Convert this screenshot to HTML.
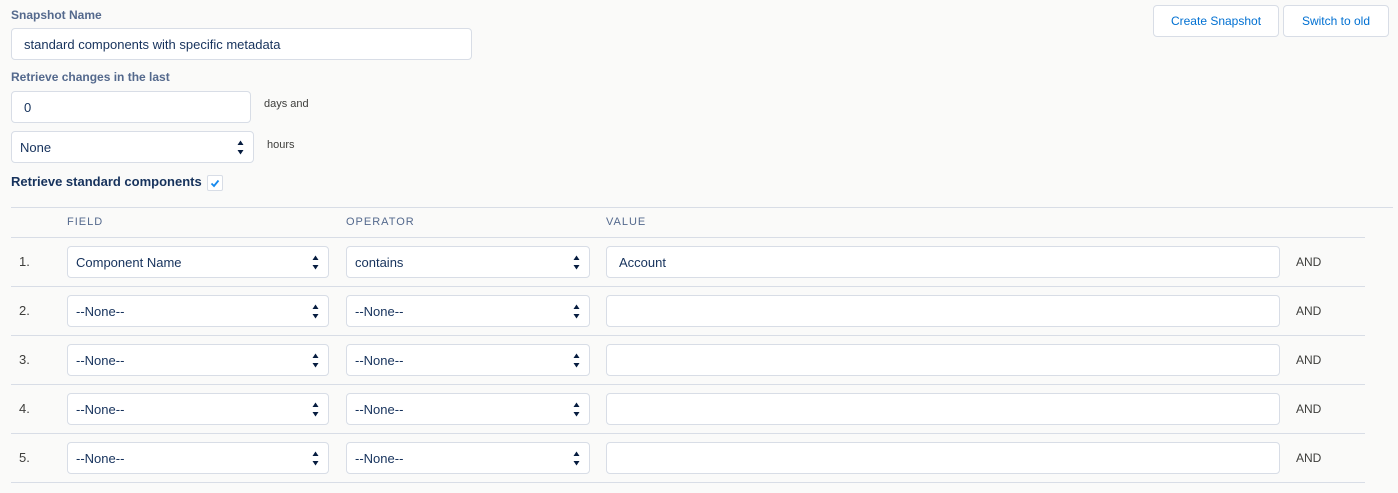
<!DOCTYPE html>
<html><head><meta charset="utf-8"><style>
*{box-sizing:border-box;margin:0;padding:0}
body{width:1398px;height:493px;background:#fafaf9;font-family:"Liberation Sans",sans-serif;position:relative;overflow:hidden;color:#16325c}
.a{position:absolute}
.lbl{font-size:12px;color:#54698d;font-weight:bold}
.box{position:absolute;background:#fff;border:1px solid #d8dde6;border-radius:4px;font-size:13px;color:#16325c;padding-left:12px;display:flex;align-items:center}
.sel{padding-left:8px}
.arr{position:absolute;right:9px;top:8px;width:7px;height:15px}
.small{font-size:11px;color:#3e3e3c}
.hd{font-size:11px;color:#54698d;letter-spacing:1px}
.line{position:absolute;height:1px;background:#d8dde6}
.btn{position:absolute;background:#fff;border:1px solid #d8dde6;border-radius:4px;color:#0070d2;font-size:12px;display:flex;align-items:center;justify-content:center}
.num{font-size:13px;color:#3e3e3c}
.and{font-size:12px;color:#3e3e3c}
</style></head><body>
<div class="a lbl" style="left:11px;top:8px">Snapshot Name</div>
<div class="box" style="left:11px;top:28px;width:461px;height:32px">standard components with specific metadata</div>
<div class="a lbl" style="left:11px;top:70px">Retrieve changes in the last</div>
<div class="box" style="left:11px;top:91px;width:240px;height:32px">0</div>
<div class="a small" style="left:264px;top:98px">days and</div>
<div class="box sel" style="left:11px;top:131px;width:243px;height:32px">None<svg class="arr" viewBox="0 0 7 15"><path d="M0.5 5L3.5 0.5L6.5 5Z M0.5 10L3.5 14.5L6.5 10Z" fill="#061c3f"/></svg></div>
<div class="a small" style="left:267px;top:139px">hours</div>
<div class="a" style="left:11px;top:174px;font-size:13px;font-weight:bold;color:#16325c">Retrieve standard components</div>
<div class="a" style="left:207px;top:175px;width:16px;height:16px;background:#fff;border:1px solid #d8dde6;border-radius:2px"><svg width="14" height="14" viewBox="0 0 14 14"><path d="M3.5 7.5L6 10L10.5 4.5" stroke="#1589ee" stroke-width="1.8" fill="none"/></svg></div>
<div class="btn" style="left:1153px;top:5px;width:126px;height:32px">Create Snapshot</div>
<div class="btn" style="left:1283px;top:5px;width:106px;height:32px">Switch to old</div>
<div class="line" style="left:11px;top:207px;width:1382px"></div>
<div class="a hd" style="left:67px;top:216px">FIELD</div>
<div class="a hd" style="left:346px;top:216px">OPERATOR</div>
<div class="a hd" style="left:606px;top:216px">VALUE</div>
<div class="line" style="left:11px;top:237px;width:1354px"></div>

<div class="a num" style="left:19px;top:254px">1.</div>
<div class="box sel" style="left:67px;top:246px;width:262px;height:32px">Component Name<svg class="arr" viewBox="0 0 7 15"><path d="M0.5 5L3.5 0.5L6.5 5Z M0.5 10L3.5 14.5L6.5 10Z" fill="#061c3f"/></svg></div>
<div class="box sel" style="left:346px;top:246px;width:244px;height:32px">contains<svg class="arr" viewBox="0 0 7 15"><path d="M0.5 5L3.5 0.5L6.5 5Z M0.5 10L3.5 14.5L6.5 10Z" fill="#061c3f"/></svg></div>
<div class="box" style="left:606px;top:246px;width:674px;height:32px">Account</div>
<div class="a and" style="left:1296px;top:255px">AND</div>
<div class="line" style="left:11px;top:286px;width:1354px"></div>

<div class="a num" style="left:19px;top:303px">2.</div>
<div class="box sel" style="left:67px;top:295px;width:262px;height:32px">--None--<svg class="arr" viewBox="0 0 7 15"><path d="M0.5 5L3.5 0.5L6.5 5Z M0.5 10L3.5 14.5L6.5 10Z" fill="#061c3f"/></svg></div>
<div class="box sel" style="left:346px;top:295px;width:244px;height:32px">--None--<svg class="arr" viewBox="0 0 7 15"><path d="M0.5 5L3.5 0.5L6.5 5Z M0.5 10L3.5 14.5L6.5 10Z" fill="#061c3f"/></svg></div>
<div class="box" style="left:606px;top:295px;width:674px;height:32px"></div>
<div class="a and" style="left:1296px;top:304px">AND</div>
<div class="line" style="left:11px;top:335px;width:1354px"></div>

<div class="a num" style="left:19px;top:352px">3.</div>
<div class="box sel" style="left:67px;top:344px;width:262px;height:32px">--None--<svg class="arr" viewBox="0 0 7 15"><path d="M0.5 5L3.5 0.5L6.5 5Z M0.5 10L3.5 14.5L6.5 10Z" fill="#061c3f"/></svg></div>
<div class="box sel" style="left:346px;top:344px;width:244px;height:32px">--None--<svg class="arr" viewBox="0 0 7 15"><path d="M0.5 5L3.5 0.5L6.5 5Z M0.5 10L3.5 14.5L6.5 10Z" fill="#061c3f"/></svg></div>
<div class="box" style="left:606px;top:344px;width:674px;height:32px"></div>
<div class="a and" style="left:1296px;top:353px">AND</div>
<div class="line" style="left:11px;top:384px;width:1354px"></div>

<div class="a num" style="left:19px;top:401px">4.</div>
<div class="box sel" style="left:67px;top:393px;width:262px;height:32px">--None--<svg class="arr" viewBox="0 0 7 15"><path d="M0.5 5L3.5 0.5L6.5 5Z M0.5 10L3.5 14.5L6.5 10Z" fill="#061c3f"/></svg></div>
<div class="box sel" style="left:346px;top:393px;width:244px;height:32px">--None--<svg class="arr" viewBox="0 0 7 15"><path d="M0.5 5L3.5 0.5L6.5 5Z M0.5 10L3.5 14.5L6.5 10Z" fill="#061c3f"/></svg></div>
<div class="box" style="left:606px;top:393px;width:674px;height:32px"></div>
<div class="a and" style="left:1296px;top:402px">AND</div>
<div class="line" style="left:11px;top:433px;width:1354px"></div>

<div class="a num" style="left:19px;top:450px">5.</div>
<div class="box sel" style="left:67px;top:442px;width:262px;height:32px">--None--<svg class="arr" viewBox="0 0 7 15"><path d="M0.5 5L3.5 0.5L6.5 5Z M0.5 10L3.5 14.5L6.5 10Z" fill="#061c3f"/></svg></div>
<div class="box sel" style="left:346px;top:442px;width:244px;height:32px">--None--<svg class="arr" viewBox="0 0 7 15"><path d="M0.5 5L3.5 0.5L6.5 5Z M0.5 10L3.5 14.5L6.5 10Z" fill="#061c3f"/></svg></div>
<div class="box" style="left:606px;top:442px;width:674px;height:32px"></div>
<div class="a and" style="left:1296px;top:451px">AND</div>
<div class="line" style="left:11px;top:482px;width:1354px"></div>
</body></html>
